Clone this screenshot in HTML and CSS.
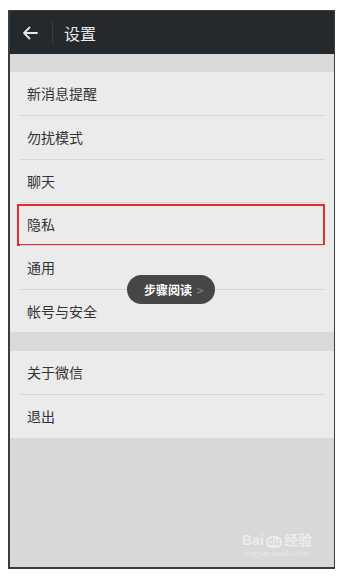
FILE: index.html
```html
<!DOCTYPE html>
<html lang="zh-CN">
<head>
    <meta charset="UTF-8">
    <meta name="viewport" content="width=device-width, initial-scale=1.0">
    <title>设置</title>
    <link rel="stylesheet" href="styles.css">
</head>
<body>
    <div class="phone">
        <header class="topbar">
            <svg class="back" width="16" height="14" viewBox="0 0 16 14">
                <path d="M15 7H2M7.5 1.5L2 7l5.5 5.5" fill="none" stroke="#e6e6e6" stroke-width="1.8" stroke-linecap="round" stroke-linejoin="round"/>
            </svg>
            <span class="bar-divider"></span>
            <h1>设置</h1>
        </header>

        <div class="band"></div>
        <section class="group">
            <div class="row">新消息提醒</div>
            <div class="row">勿扰模式</div>
            <div class="row">聊天</div>
            <div class="row marked">隐私</div>
            <div class="row">通用</div>
            <div class="row">帐号与安全</div>
        </section>

        <div class="band"></div>
        <section class="group">
            <div class="row">关于微信</div>
            <div class="row">退出</div>
        </section>

        <div class="step-read">步骤阅读 <span class="chev">&gt;</span></div>

        <div class="watermark">
            <div class="wm-logo">Bai<span class="paw">du</span>经验</div>
            <div class="wm-url">jingyan.baidu.com</div>
        </div>
    </div>
</body>
</html>
```

FILE: styles.css
```css
body {
    margin: 0;
    background-color: #fff;
    font-family: "Noto Sans CJK SC", "Noto Sans", sans-serif;
}

.phone {
    position: relative;
    box-sizing: border-box;
    width: 327px;
    height: 559px;
    margin: 10px 0 0 8px;
    background-color: #d8d8d8;
    border: 1px solid #3c3c3c;
    border-left-width: 2px;
    border-bottom-width: 2px;
}

.topbar {
    display: flex;
    align-items: center;
    height: 43px;
    padding-left: 12px;
    background-color: #23292c;
}

.back {
    display: block;
}

.bar-divider {
    width: 1px;
    height: 22px;
    margin-left: 14px;
    background-color: #383e41;
}

.topbar h1 {
    margin: 0 0 0 11px;
    font-size: 16px;
    font-weight: normal;
    color: #e9e9e9;
}

.band {
    height: 18px;
    background-color: #d9d9d9;
}

.group + .band {
    height: 19px;
}

.group {
    background-color: #ebebeb;
}

.row {
    position: relative;
    box-sizing: border-box;
    height: 43.33px;
    line-height: 42px;
    margin: 0 9px 0 10px;
    padding-left: 7px;
    font-size: 14px;
    color: #333;
    border-top: 1px solid #d6d6d6;
}

.row:first-child {
    border-top: none;
    line-height: 43px;
}

.marked::after {
    content: "";
    position: absolute;
    top: 1px;
    bottom: -1px;
    left: -3px;
    right: 0;
    border: 2px solid #e52b2b;
}

.step-read {
    position: absolute;
    left: 117px;
    top: 264px;
    width: 88px;
    height: 29px;
    line-height: 29px;
    box-sizing: border-box;
    padding-left: 17px;
    border-radius: 15px;
    background-color: #464646;
    color: #fff;
    font-size: 12px;
    font-weight: bold;
}

.chev {
    margin-left: 2px;
    font-weight: normal;
    color: #8a8a8a;
}

.watermark {
    position: absolute;
    right: 22px;
    bottom: 9px;
    text-align: center;
    color: rgba(255, 255, 255, 0.55);
}

.wm-logo {
    font-family: "Liberation Sans", "Noto Sans CJK SC", sans-serif;
    font-size: 14px;
    font-weight: bold;
    line-height: 16px;
}

.paw {
    display: inline-block;
    margin: 0 2px;
    padding: 0 2px;
    font-size: 10px;
    line-height: 12px;
    color: #d8d8d8;
    background-color: rgba(255, 255, 255, 0.55);
    border-radius: 6px;
}

.wm-url {
    font-family: "Liberation Serif", serif;
    font-size: 9px;
    color: rgba(255, 255, 255, 0.45);
}
```
